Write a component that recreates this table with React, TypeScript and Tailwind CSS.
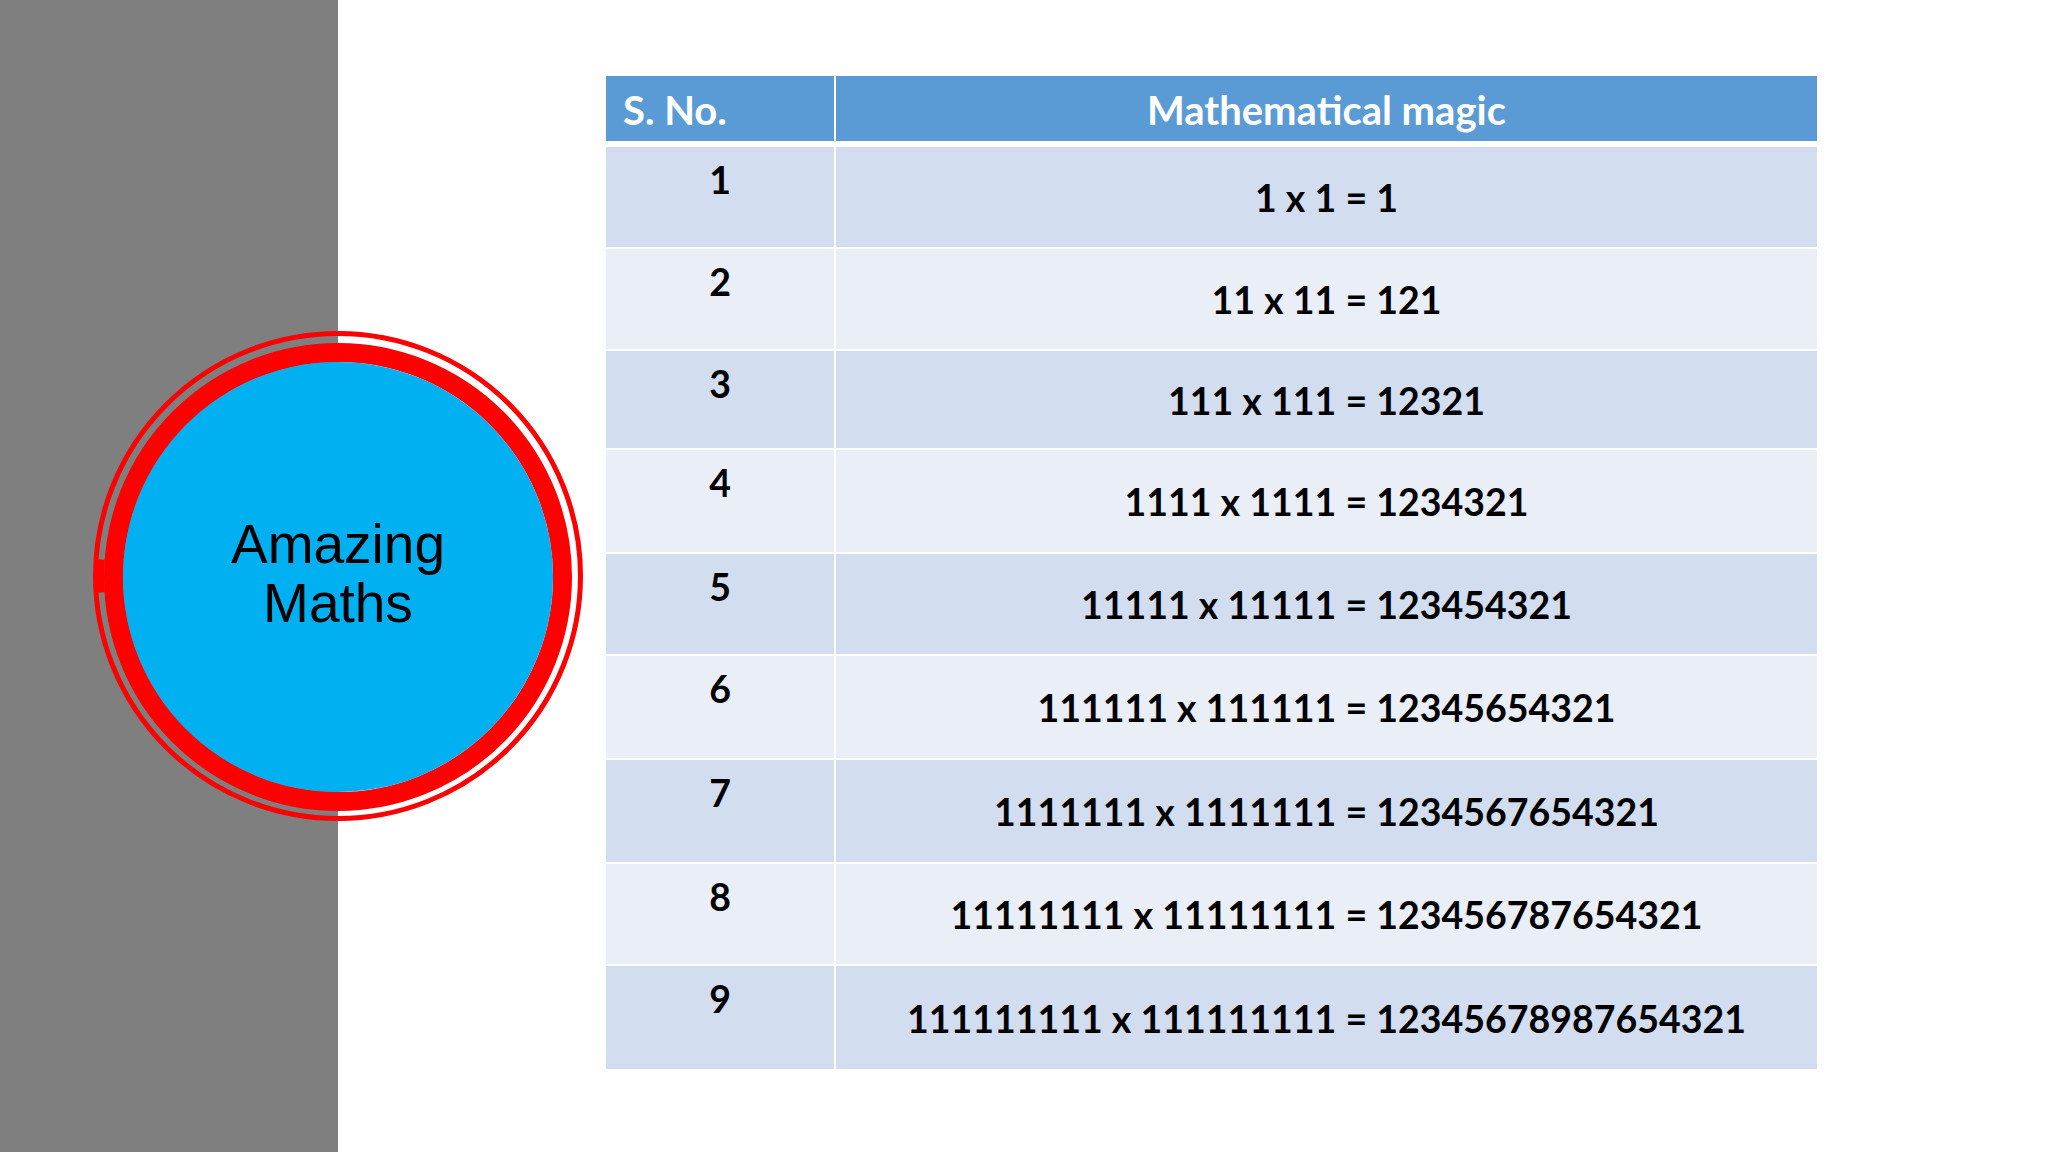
const rows = [
  { n: '1', expr: '1 x 1 = 1', h: 'h-[100px]' },
  { n: '2', expr: '11 x 11 = 121', h: 'h-[100px]' },
  { n: '3', expr: '111 x 111 = 12321', h: 'h-[97px]' },
  { n: '4', expr: '1111 x 1111 = 1234321', h: 'h-[102px]' },
  { n: '5', expr: '11111 x 11111 = 123454321', h: 'h-[100px]' },
  { n: '6', expr: '111111 x 111111 = 12345654321', h: 'h-[102px]' },
  { n: '7', expr: '1111111 x 1111111 = 1234567654321', h: 'h-[102px]' },
  { n: '8', expr: '11111111 x 11111111 = 123456787654321', h: 'h-[100px]' },
  { n: '9', expr: '111111111 x 111111111 = 12345678987654321', h: 'h-[103px]' },
];

const Badge = () => (
  <div className="absolute left-[88px] top-[326px] w-[500px] h-[500px]">
    <svg width="500" height="500" viewBox="0 0 500 500" className="absolute inset-0">
      <circle cx="250" cy="250" r="242.5" fill="none" stroke="#ff0000" strokeWidth="5" />
      <path d="M 13.3 233.4 A 237 237 0 0 0 13.3 266.6" fill="none" stroke="#ff0000" strokeWidth="7" />
      <circle cx="250" cy="251" r="224.5" fill="none" stroke="#ff0000" strokeWidth="19" />
      <circle cx="250" cy="251" r="215" fill="#00b0f0" />
    </svg>
    <div className="absolute inset-0 flex items-center justify-center pb-[5px]">
      <p className="text-center text-[55px] leading-[59px] text-black font-['Liberation_Sans',Arial,sans-serif]">
        Amazing
        <br />
        Maths
      </p>
    </div>
  </div>
);

export default function App() {
  return (
    <div className="relative flex w-[2048px] h-[1152px] overflow-hidden bg-white font-['Lato','Open_Sans',sans-serif]">
      <div className="w-[338px] h-full bg-[#7f7f7f]" />
      <div className="flex-1 pl-[268px] pt-[76px]">
        <div className="w-[1211px] flex flex-col">
          {/* header */}
          <div className="flex gap-[2px] h-[65px] mb-[6px]">
            <div className="w-[228px] bg-[#5b9bd5] flex items-center pl-[17px] pt-[2px]">
              <span className="text-white font-bold text-[40px] leading-none">S. No.</span>
            </div>
            <div className="flex-1 bg-[#5b9bd5] flex items-center justify-center pt-[2px]">
              <span className="text-white font-bold text-[40px] leading-none">Mathematical magic</span>
            </div>
          </div>
          {/* body */}
          <div className="flex flex-col gap-[2px]">
            {rows.map((r, i) => {
              const bg = i % 2 === 0 ? 'bg-[#d2deef]' : 'bg-[#eaeff7]';
              return (
                <div key={r.n} className={`flex gap-[2px] ${r.h}`}>
                  <div className={`w-[228px] ${bg} flex justify-center pt-[14px]`}>
                    <span className="text-black font-bold text-[37.5px] leading-none">{r.n}</span>
                  </div>
                  <div className={`flex-1 ${bg} flex items-center justify-center pt-[2px]`}>
                    <span className="text-black font-bold text-[37.5px] leading-none whitespace-nowrap">{r.expr}</span>
                  </div>
                </div>
              );
            })}
          </div>
        </div>
      </div>
      <Badge />
    </div>
  );
}
